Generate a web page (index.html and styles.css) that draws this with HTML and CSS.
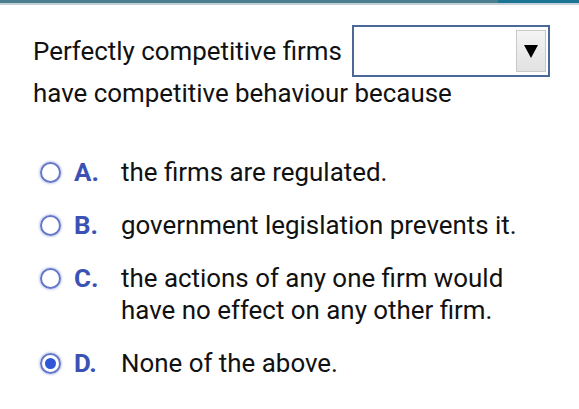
FILE: index.html
```html
<!DOCTYPE html>
<html>
<head>
<meta charset="utf-8">
<link rel="stylesheet" href="styles.css">
</head>
<body>
<div class="topbar"><div class="topbar-main"></div><div class="topbar-end"></div></div>
<div class="question">
  <div class="q-line1">
    <span>Perfectly competitive firms</span>
    <div class="select"><div class="select-btn"><span class="tri"></span></div></div>
  </div>
  <div class="q-line2">have competitive behaviour because</div>
</div>
<div class="options">
  <div class="option"><span class="radio"></span><span class="letter">A.</span><span class="text">the firms are regulated.</span></div>
  <div class="option"><span class="radio"></span><span class="letter">B.</span><span class="text">government legislation prevents it.</span></div>
  <div class="option"><span class="radio"></span><span class="letter">C.</span><span class="text">the actions of any one firm would<br>have no effect on any other firm.</span></div>
  <div class="option"><span class="radio checked"></span><span class="letter">D.</span><span class="text">None of the above.</span></div>
</div>
</body>
</html>
```
FILE: styles.css
```css
html, body { margin: 0; padding: 0; background: #fff; }
body { font-family: Roboto, "Noto Sans", sans-serif; color: #111; font-size: 25.9px; width: 579px; height: 409px; overflow: hidden; }
.topbar { display: flex; height: 3px; border-bottom: 2px solid #c3d0d8; }
.topbar-main { flex: 1; background: #4a7d8e; }
.topbar-end { width: 81px; background: #1b7592; }
.question { padding: 20px 0 0 33px; }
.q-line1 { display: flex; align-items: center; gap: 10px; height: 52px; }
.select { width: 192px; height: 48px; border: 2px solid #4a6898; display: flex; justify-content: flex-end; align-items: center; padding-right: 2px; }
.select-btn { width: 28px; height: 40px; background: linear-gradient(#f4f4f4, #e2e2e2); border: 1px solid #c8c8c8; display: flex; align-items: center; justify-content: center; }
.tri { width: 0; height: 0; border-left: 7px solid transparent; border-right: 7px solid transparent; border-top: 13px solid #000; }
.q-line2 { margin-top: 0px; line-height: 32px; }
.options { padding: 47px 0 0 40px; display: flex; flex-direction: column; gap: 21px; }
.option { display: flex; align-items: flex-start; line-height: 32px; }
.radio { width: 17px; height: 17px; border: 2px solid #6577c9; border-radius: 50%; margin-top: 6px; box-shadow: 0 0 2px 1px rgba(110,130,210,0.35); display: flex; align-items: center; justify-content: center; box-sizing: content-box; flex: none; }
.radio.checked::after { content: ""; width: 11px; height: 11px; border-radius: 50%; background: #2e56d6; }
.letter { color: #3b52b4; font-weight: 700; width: 47px; margin-left: 13px; flex: none; }
.text { color: #111; }
```
